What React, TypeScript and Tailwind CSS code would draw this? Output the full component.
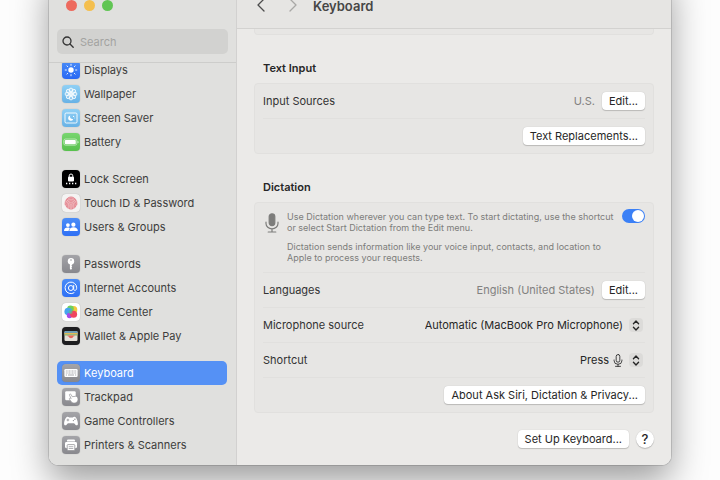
import { useState } from "react";
import type { ReactNode } from "react";

type Item = { label: string; bg: string; icon: ReactNode };

const groups: Item[][] = [
  [
    {
      label: "Displays",
      bg: "bg-linear-to-b from-[#4a8cf7] to-[#2a68f4]",
      icon: (
        <g stroke="#fff" strokeWidth="0.9" strokeLinecap="round">
          <circle cx="9" cy="9" r="2.7" fill="#fff" stroke="none" />
          <path d="M9 3.2v1.2M9 13.6v1.2M3.2 9h1.2M13.6 9h1.2M4.9 4.9l.8.8M12.3 12.3l.8.8M4.9 13.1l.8-.8M12.3 5.7l.8-.8" />
        </g>
      ),
    },
    {
      label: "Wallpaper",
      bg: "bg-linear-to-b from-[#8fd0f5] to-[#68b2e6]",
      icon: (
        <g fill="#fff" fillOpacity="0.25" stroke="#fff" strokeWidth="0.8">
          <circle cx="9" cy="4.9" r="1.8" />
          <circle cx="11.9" cy="6.1" r="1.8" />
          <circle cx="13.1" cy="9" r="1.8" />
          <circle cx="11.9" cy="11.9" r="1.8" />
          <circle cx="9" cy="13.1" r="1.8" />
          <circle cx="6.1" cy="11.9" r="1.8" />
          <circle cx="4.9" cy="9" r="1.8" />
          <circle cx="6.1" cy="6.1" r="1.8" />
          <circle cx="9" cy="9" r="1.7" fillOpacity="0.8" />
        </g>
      ),
    },
    {
      label: "Screen Saver",
      bg: "bg-linear-to-b from-[#8fd0f5] to-[#68b2e6]",
      icon: (
        <>
          <rect x="3" y="4" width="12" height="10" rx="1.2" fill="none" stroke="#fff" strokeWidth="0.9" />
          <path d="M8.2 6.6a2.6 2.6 0 1 0 3 3.3 2.4 2.4 0 0 1-3-3.3z" fill="#fff" />
          <circle cx="11.6" cy="7.4" r="0.6" fill="#fff" />
          <circle cx="12.6" cy="9" r="0.4" fill="#fff" />
        </>
      ),
    },
    {
      label: "Battery",
      bg: "bg-linear-to-b from-[#78d56f] to-[#58c14d]",
      icon: (
        <>
          <rect x="1.8" y="6" width="13" height="6.2" rx="1.8" fill="none" stroke="#fff" strokeOpacity="0.7" strokeWidth="0.7" />
          <rect x="2.8" y="7" width="11" height="4.2" rx="1" fill="#fff" />
          <path d="M15.7 8v2.2q.8-.3.8-1.1t-.8-1.1z" fill="#fff" />
        </>
      ),
    },
  ],
  [
    {
      label: "Lock Screen",
      bg: "bg-black",
      icon: (
        <>
          <path d="M7.2 7.4V5.8a1.8 1.8 0 0 1 3.6 0v1.6" fill="none" stroke="#fff" strokeWidth="1" />
          <rect x="6" y="6.8" width="6" height="4.6" rx="0.8" fill="#fff" />
          <path d="M4 13.5h1.3M7 13.5h1.3M10 13.5h1.3M13 13.5h1.3" stroke="#fff" strokeWidth="1.3" />
        </>
      ),
    },
    {
      label: "Touch ID & Password",
      bg: "bg-[#f4f3f2]",
      icon: (
        <>
          <circle cx="9" cy="9" r="6.4" fill="#f0c3c6" />
          <g fill="none" stroke="#e0707c" strokeWidth="0.7" strokeLinecap="round">
            <path d="M4.1 6.2C5.200 4.200 7 3.100 9 3.100s3.800 1.100 4.900 3.100M3.200 10.800c-.5-3.600 2.300-6.200 5.800-6.200s6.300 2.600 5.800 6.200M4.500 12.800c-1.100-3.900 1.200-6.700 4.500-6.700s5.600 2.800 4.500 6.700M6 14.200c-1.400-3.900 0-6.600 3-6.600s4.400 2.700 3 6.600M7.600 14.900c-1-3.300-.8-5.800 1.400-5.800s2.400 2.500 1.400 5.800M9 10.600v4.600" />
          </g>
        </>
      ),
    },
    {
      label: "Users & Groups",
      bg: "bg-linear-to-b from-[#4a8cf7] to-[#2f70f5]",
      icon: (
        <g fill="#fff">
          <circle cx="5.9" cy="7.1" r="1.9" />
          <path d="M2 13c0-2.4 1.5-3.5 3.7-3.5 1.2 0 1.8.3 2.3.8-.9.8-1.3 1.6-1.3 2.7z" />
          <circle cx="11.4" cy="6.7" r="2.1" />
          <path d="M7.3 13c0-2.5 1.7-3.7 4.2-3.7s4.3 1.2 4.3 3.7z" />
        </g>
      ),
    },
  ],
  [
    {
      label: "Passwords",
      bg: "bg-linear-to-b from-[#a4a4a8] to-[#88888d]",
      icon: (
        <>
          <circle cx="9" cy="6.2" r="3.2" fill="#fff" />
          <path d="M7.900 8.500h2.300v1.300l-.8.800.8.900-.8.900.7.800-1.100 1.700L7.900 13.700z" fill="#fff" />
          <circle cx="9" cy="5" r="0.8" fill="#98989c" />
        </>
      ),
    },
    {
      label: "Internet Accounts",
      bg: "bg-linear-to-b from-[#4a8cf7] to-[#2f70f5]",
      icon: (
        <g fill="none" stroke="#fff" strokeWidth="1" strokeLinecap="round">
          <circle cx="8.9" cy="9" r="2.5" />
          <path d="M11.7 6.5v3.4c0 1.3.8 1.7 1.5 1.5 1-.3 1.5-1.4 1.500-2.600a5.800 5.800 0 1 0-2.700 5" />
        </g>
      ),
    },
    {
      label: "Game Center",
      bg: "bg-white",
      icon: (
        <>
          <circle cx="11.5" cy="6.7" r="3.8" fill="#f3c73c" />
          <circle cx="8.5" cy="5.8" r="3.3" fill="#6fd05c" />
          <circle cx="6.2" cy="8.5" r="3.8" fill="#47a5ee" />
          <circle cx="7.5" cy="12.5" r="2.7" fill="#a64be8" />
          <circle cx="11.6" cy="11.2" r="3.5" fill="#f0455f" />
          <circle cx="8.6" cy="9" r="2" fill="#5bbf8a" fillOpacity="0.7" />
        </>
      ),
    },
    {
      label: "Wallet & Apple Pay",
      bg: "bg-[#1d1d1f]",
      icon: (
        <>
          <rect x="2.500" y="4" width="13" height="10" rx="1.2" fill="#e3e0d8" />
          <path d="M2.500 6.500V5.200Q2.500 4 3.700 4h10.600q1.200 0 1.200 1.200v1.300z" fill="#6e9fb4" />
          <rect x="2.500" y="6" width="13" height="1.500" fill="#e3b954" />
          <rect x="2.500" y="7.300" width="13" height="1.200" fill="#83b267" />
          <path d="M5.500 8.500h7v.8h-.8Q10.800 11.200 9 11.200T6.300 9.300h-.8z" fill="#e7685a" />
        </>
      ),
    },
  ],
  [
    {
      label: "Keyboard",
      bg: "bg-linear-to-b from-[#a4a4a8] to-[#88888d]",
      icon: (
        <>
          <rect x="2.4" y="5" width="13.2" height="8" rx="1.2" fill="#fff" />
          <g stroke="#98989c" strokeWidth="0.8">
            <path d="M3.8 7h10.400M3.8 9h10.400" strokeDasharray="1.1 0.45" />
            <path d="M3.8 11h1.200M6 11h6M13 11h1.200" />
          </g>
        </>
      ),
    },
    {
      label: "Trackpad",
      bg: "bg-linear-to-b from-[#a4a4a8] to-[#88888d]",
      icon: (
        <>
          <rect x="3.2" y="3.2" width="10.5" height="9" rx="1.2" fill="#fff" />
          <path
            d="M7.600 6.300c.6-.5 1.300-.2 1.600.4l1 2 3.300-.4c1.700 0 2.500 1.300 2.500 3 0 2.300-1.500 3.800-3.700 3.800-1.900 0-2.800-.9-3.600-2.200l-1.300-1.800c-.3-.8.500-1.300 1.200-.9l.6.4-1.700-3.300c-.2-.4-.2-.8.100-1z"
            fill="#fff"
            stroke="#929296"
            strokeWidth="0.7"
          />
        </>
      ),
    },
    {
      label: "Game Controllers",
      bg: "bg-linear-to-b from-[#a4a4a8] to-[#88888d]",
      icon: (
        <>
          <path
            d="M5 4.900c1-.3 1.700.3 2.200.5h3.600c.5-.2 1.200-.8 2.200-.5 1.600.5 2.900 4.500 2.900 6.800 0 2-1.700 2.100-2.700.8l-1.100-1.300H5.900l-1.100 1.300c-1 1.300-2.700 1.200-2.700-.8 0-2.300 1.300-6.300 2.900-6.800z"
            fill="#fff"
          />
          <path d="M4.600 8h2.600M5.900 6.700v2.600" stroke="#929296" strokeWidth="0.8" />
          <circle cx="11.4" cy="8.6" r="0.7" fill="#929296" />
          <circle cx="12.900" cy="7.200" r="0.7" fill="#929296" />
        </>
      ),
    },
    {
      label: "Printers & Scanners",
      bg: "bg-linear-to-b from-[#a4a4a8] to-[#88888d]",
      icon: (
        <>
          <path d="M5 5.400V4.600Q5 3.500 6.100 3.500h5.800q1.100 0 1.100 1.100v.8z" fill="#fff" />
          <rect x="3" y="6" width="12" height="6.2" rx="1.4" fill="#fff" />
          <rect x="5.2" y="8.6" width="7.600" height="6" rx="0.8" fill="#fff" stroke="#929296" strokeWidth="0.8" />
          <path d="M6.700 10.700h4.600M6.700 12.500h4.600" stroke="#929296" strokeWidth="0.7" />
        </>
      ),
    },
  ],
];

const button =
  "h-[18px] rounded-[4px] bg-white px-[7px] text-[11px] leading-[18px] text-[#262626] shadow-[0_0_1px_rgba(0,0,0,0.2),0_1px_1px_rgba(0,0,0,0.18)]";

const row = "flex h-[35px] items-center";

function Mic({ solid = false, className }: { solid?: boolean; className: string }) {
  return (
    <svg viewBox="0 0 14 20" className={className} fill="none" stroke="currentColor" strokeWidth={solid ? 1.2 : 1.3} strokeLinecap="round">
      <rect x="4.2" y="0.8" width="5.6" height="11.8" rx="2.8" fill={solid ? "currentColor" : "none"} />
      <path d="M1 9.200v1.200a6 5.400 0 0 0 12 0V9.200M7 16v3M3.200 19h7.600" />
    </svg>
  );
}

function Picker({ id, options, glyph }: { id: string; options: string[]; glyph?: ReactNode }) {
  return (
    <div className="relative flex items-center text-[#262626]">
      <select id={id} className={`field-sizing-content appearance-none bg-transparent text-[11px] leading-4 outline-none ${glyph ? "pr-9" : "pr-[22px]"}`}>
        {options.map((o) => (
          <option key={o}>{o}</option>
        ))}
      </select>
      <span className="pointer-events-none absolute right-[2px] flex items-center gap-[6px]">
        {glyph}
        <span className="flex size-[14px] items-center justify-center rounded-[4px] bg-[#dcdbd9]">
          <svg viewBox="0 0 8 12" className="h-[11px] w-2" fill="none" stroke="currentColor" strokeWidth="1.5" strokeLinecap="round" strokeLinejoin="round">
            <path d="M1.200 4L4 1.200 6.800 4M1.200 8L4 10.800 6.800 8" />
          </svg>
        </span>
      </span>
    </div>
  );
}

export default function App() {
  const [active, setActive] = useState("Keyboard");
  const [dictation, setDictation] = useState(true);

  return (
    <div className="min-h-screen overflow-hidden bg-[#fdfdfd] px-[49px] pb-[14px] font-['Inter','Liberation_Sans',sans-serif] text-[11px] leading-4">
      <div className="-mt-8 flex overflow-hidden rounded-[9px] shadow-[0_0_0_1px_rgba(0,0,0,0.12),0_16px_36px_rgba(0,0,0,0.38)]">
        {/* Sidebar */}
        <aside className="flex w-[188px] shrink-0 flex-col border-r border-[#d2d1d0] bg-[#e0e0de]">
          <div className="border-b border-[#cdcdcb] px-2 pb-2 pt-8">
            <div className="flex gap-[7px] px-[9px]">
              <button aria-label="Close" className="size-[11px] rounded-full bg-[#ed6a5e]" />
              <button aria-label="Minimize" className="size-[11px] rounded-full bg-[#f4bf4f]" />
              <button aria-label="Zoom" className="size-[11px] rounded-full bg-[#61c554]" />
            </div>
            <label className="mt-[18px] flex h-[25px] items-center gap-[6px] rounded-[5px] bg-[#d2d2d0] px-[5px]">
              <svg viewBox="0 0 12 12" className="size-3 shrink-0" fill="none" stroke="#333" strokeWidth="1.3" strokeLinecap="round">
                <circle cx="5" cy="5" r="4" />
                <path d="M8 8l3.200 3.200" />
              </svg>
              <input type="search" aria-label="Search" placeholder="Search" className="w-full min-w-0 bg-transparent outline-none placeholder:text-[#a3a3a1]" />
            </label>
          </div>

          <nav className="overflow-hidden pb-2 pl-2 pr-[9px]">
            <div className="-mt-[5px] space-y-[13px]">
              {groups.map((group) => (
                <ul key={group[0].label}>
                  {group.map((item) => (
                    <li key={item.label}>
                      <button
                        onClick={() => setActive(item.label)}
                        className={`flex h-6 w-full items-center gap-1 rounded-[5px] px-[5px] text-left ${
                          active === item.label ? "bg-[#5591f5] text-white" : "text-[#3d3d3c]"
                        }`}
                      >
                        <span className={`size-[18px] shrink-0 rounded-[4px] shadow-[0_0_1px_rgba(0,0,0,0.3)] ${item.bg}`}>
                          <svg viewBox="0 0 18 18" className="size-full">
                            {item.icon}
                          </svg>
                        </span>
                        {item.label}
                      </button>
                    </li>
                  ))}
                </ul>
              ))}
            </div>
          </nav>
        </aside>

        {/* Detail pane */}
        <main className="flex min-w-0 flex-1 flex-col bg-[#ebeae8]">
          <header className="flex h-[61px] items-end border-b border-[#d3d2d0] bg-[#e6e5e3] px-5 pb-4">
            <button aria-label="Back" className="text-[#4d4d4d]">
              <svg viewBox="0 0 8 14" className="h-[14px] w-2" fill="none" stroke="currentColor" strokeWidth="1.3" strokeLinecap="round" strokeLinejoin="round">
                <path d="M7 1L1 7l6 6" />
              </svg>
            </button>
            <button aria-label="Forward" className="ml-6 text-[#a9a8a6]">
              <svg viewBox="0 0 8 14" className="h-[14px] w-2" fill="none" stroke="currentColor" strokeWidth="1.3" strokeLinecap="round" strokeLinejoin="round">
                <path d="M1 1l6 6-6 6" />
              </svg>
            </button>
            <h1 className="ml-4 text-[13px] font-semibold leading-3 text-[#464646]">Keyboard</h1>
          </header>

          <div className="px-[17px]">
            <div className="h-[6px] rounded-b-[4px] border border-t-0 border-[#e1e0de] bg-[#e7e6e4]" />

            <h2 className="mt-[25px] px-[9px] font-semibold text-[#262626]">Text Input</h2>
            <section className="mt-[7px] divide-y divide-[#e1e0de] rounded-[4px] border border-[#e1e0de] bg-[#e7e6e4] px-2">
              <div className={`${row} text-[#333]`}>
                <span className="flex-1">Input Sources</span>
                <span className="mr-[7px] text-[#82817f]">U.S.</span>
                <button className={button}>Edit...</button>
              </div>
              <div className="flex h-[34px] items-center justify-end">
                <button className={button}>Text Replacements...</button>
              </div>
            </section>

            <h2 className="mt-[25px] px-[9px] font-semibold text-[#262626]">Dictation</h2>
            <section className="mt-[7px] divide-y divide-[#e1e0de] rounded-[4px] border border-[#e1e0de] bg-[#e7e6e4] px-2">
              <div className="flex pb-[9px] pt-[6px] text-[#7d7d7b]">
                <Mic solid className="ml-[2px] mt-1 h-5 w-[14px] shrink-0" />
                <label htmlFor="dictation" className="ml-2 mt-[2px] flex-1 text-[9px] leading-[11px]">
                  <p>Use Dictation wherever you can type text. To start dictating, use the shortcut or select Start Dictation from the Edit menu.</p>
                  <p className="mt-2">Dictation sends information like your voice input, contacts, and location to Apple to process your requests.</p>
                </label>
                <input
                  id="dictation"
                  type="checkbox"
                  role="switch"
                  checked={dictation}
                  onChange={(e) => setDictation(e.target.checked)}
                  className="ml-2 flex h-[14px] w-[23px] shrink-0 appearance-none items-center rounded-full bg-[#c5c4c2] p-px before:size-3 before:rounded-full before:bg-white checked:justify-end checked:bg-[#3b80f6]"
                />
              </div>
              <div className={`${row} text-[#333]`}>
                <span className="flex-1">Languages</span>
                <span className="mr-[7px] text-[#82817f]">English (United States)</span>
                <button className={button}>Edit...</button>
              </div>
              <div className={`${row} justify-between text-[#333]`}>
                <label htmlFor="mic">Microphone source</label>
                <Picker id="mic" options={["Automatic (MacBook Pro Microphone)", "MacBook Pro Microphone"]} />
              </div>
              <div className={`${row} justify-between text-[#333]`}>
                <label htmlFor="shortcut">Shortcut</label>
                <Picker id="shortcut" options={["Press", "Off"]} glyph={<Mic className="h-[13px] w-[10px]" />} />
              </div>
              <div className="flex h-[34px] items-center justify-end">
                <button className={button}>About Ask Siri, Dictation &amp; Privacy...</button>
              </div>
            </section>

            <footer className="flex items-center justify-end gap-[7px] py-[17px]">
              <button className={button}>Set Up Keyboard...</button>
              <button aria-label="Help" className="size-[18px] rounded-full bg-white text-[13px] font-medium leading-[18px] text-[#262626] shadow-[0_0_1px_rgba(0,0,0,0.2),0_1px_1px_rgba(0,0,0,0.18)]">
                ?
              </button>
            </footer>
          </div>
        </main>
      </div>
    </div>
  );
}
